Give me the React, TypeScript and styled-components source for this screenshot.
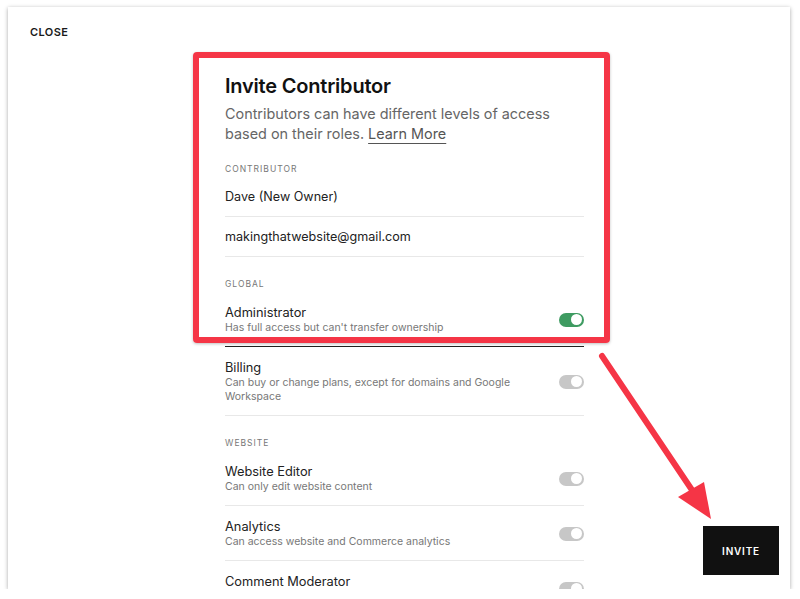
import styled, { createGlobalStyle } from "styled-components";

const GlobalStyle = createGlobalStyle`
  html, body {
    margin: 0;
    padding: 0;
    background: #ffffff;
  }
  body {
    font-family: Inter, "Liberation Sans", Arial, sans-serif;
    -webkit-font-smoothing: antialiased;
  }
`;

const Window = styled.div`
  position: relative;
  margin: 7px 10px 0 8px;
  height: 582px;
  background: #fff;
  box-shadow: 0 1px 4px rgba(0, 0, 0, 0.35);
  overflow: hidden;
`;

const TopBar = styled.div`
  padding: 13px 0 0 22px;
  height: 32px;
`;

const CloseLink = styled.span`
  font-size: 11px;
  font-weight: 600;
  letter-spacing: 0.4px;
  color: #1a1a1a;
  line-height: 13px;
`;

const Column = styled.div`
  width: 359px;
  margin: 20px 0 0 217px;
`;

const Title = styled.h1`
  margin: 0;
  font-size: 20px;
  line-height: 28px;
  font-weight: 600;
  color: #111;
  letter-spacing: -0.2px;
`;

const Lead = styled.p`
  margin: 4px 0 0;
  font-size: 14.4px;
  line-height: 20px;
  color: #666;
`;

const LearnMore = styled.a`
  color: #555;
  text-decoration: underline;
  text-underline-offset: 4px;
  text-decoration-thickness: 1px;
`;

const SectionLabel = styled.div<{ $top?: number }>`
  padding-top: ${(p) => p.$top ?? 22}px;
  margin-bottom: 2px;
  font-size: 8.5px;
  line-height: 11px;
  letter-spacing: 1px;
  color: #777;
  text-transform: uppercase;
`;

const Field = styled.div`
  height: 40px;
  display: flex;
  align-items: center;
  font-size: 12.6px;
  color: #222;
  border-bottom: 1px solid #e8e8e8;
  box-sizing: border-box;
`;

const PermRow = styled.div<{ $dark?: boolean }>`
  display: flex;
  align-items: center;
  justify-content: space-between;
  gap: 40px;
  padding: 12px 0 11px;
  border-bottom: 1px solid ${(p) => (p.$dark ? "#222" : "#e8e8e8")};
`;

const PermText = styled.div`
  flex: 1;
`;

const PermName = styled.div`
  font-size: 12.8px;
  line-height: 17px;
  color: #222;
`;

const PermDesc = styled.div`
  min-height: 14px;
  font-size: 10.5px;
  line-height: 14px;
  color: #777;
`;

const Toggle = styled.span<{ $on?: boolean }>`
  position: relative;
  flex: none;
  width: 25px;
  height: 14px;
  border-radius: 7px;
  background: ${(p) => (p.$on ? "#3e9b61" : "#c7c7c7")};
  &::after {
    content: "";
    position: absolute;
    top: 1.5px;
    right: 2px;
    width: 11px;
    height: 11px;
    border-radius: 50%;
    background: #fff;
  }
`;

const Highlight = styled.div`
  position: absolute;
  left: 185px;
  top: 45px;
  width: 417px;
  height: 291px;
  box-sizing: border-box;
  border: 6px solid #f53546;
  border-radius: 4px;
  box-shadow: 0 1px 3px rgba(0, 0, 0, 0.25);
  pointer-events: none;
`;

const Arrow = styled.svg`
  position: absolute;
  left: 0;
  top: 0;
  width: 782px;
  height: 582px;
  pointer-events: none;
`;

const InviteButton = styled.button`
  position: absolute;
  right: 11px;
  bottom: 14px;
  width: 76px;
  height: 49px;
  border: 0;
  background: #111;
  color: #fff;
  font-family: inherit;
  font-size: 10px;
  font-weight: 600;
  letter-spacing: 0.8px;
`;

type Perm = { name: string; desc?: string; on?: boolean; dark?: boolean };

const globalPerms: Perm[] = [
  { name: "Administrator", desc: "Has full access but can't transfer ownership", on: true, dark: true },
  { name: "Billing", desc: "Can buy or change plans, except for domains and Google Workspace" },
];

const websitePerms: Perm[] = [
  { name: "Website Editor", desc: "Can only edit website content" },
  { name: "Analytics", desc: "Can access website and Commerce analytics" },
  { name: "Comment Moderator" },
];

function PermList({ perms }: { perms: Perm[] }) {
  return (
    <>
      {perms.map((p) => (
        <PermRow key={p.name} $dark={p.dark}>
          <PermText>
            <PermName>{p.name}</PermName>
            <PermDesc>{p.desc}</PermDesc>
          </PermText>
          <Toggle $on={p.on} />
        </PermRow>
      ))}
    </>
  );
}

export default function App() {
  return (
    <>
      <GlobalStyle />
      <Window>
        <TopBar>
          <CloseLink>CLOSE</CloseLink>
        </TopBar>
        <Column>
          <Title>Invite Contributor</Title>
          <Lead>
            Contributors can have different levels of access based on their roles.{" "}
            <LearnMore>Learn More</LearnMore>
          </Lead>
          <SectionLabel $top={20}>Contributor</SectionLabel>
          <Field>Dave (New Owner)</Field>
          <Field>makingthatwebsite@gmail.com</Field>
          <SectionLabel>Global</SectionLabel>
          <PermList perms={globalPerms} />
          <SectionLabel>Website</SectionLabel>
          <PermList perms={websitePerms} />
        </Column>
        <Highlight />
        <Arrow viewBox="0 0 782 582">
          <line x1="594" y1="349" x2="686" y2="486" stroke="#f53546" strokeWidth="6" strokeLinecap="round" />
          <polygon points="670,490 696,475 703,512" fill="#f53546" />
        </Arrow>
        <InviteButton>INVITE</InviteButton>
      </Window>
    </>
  );
}
